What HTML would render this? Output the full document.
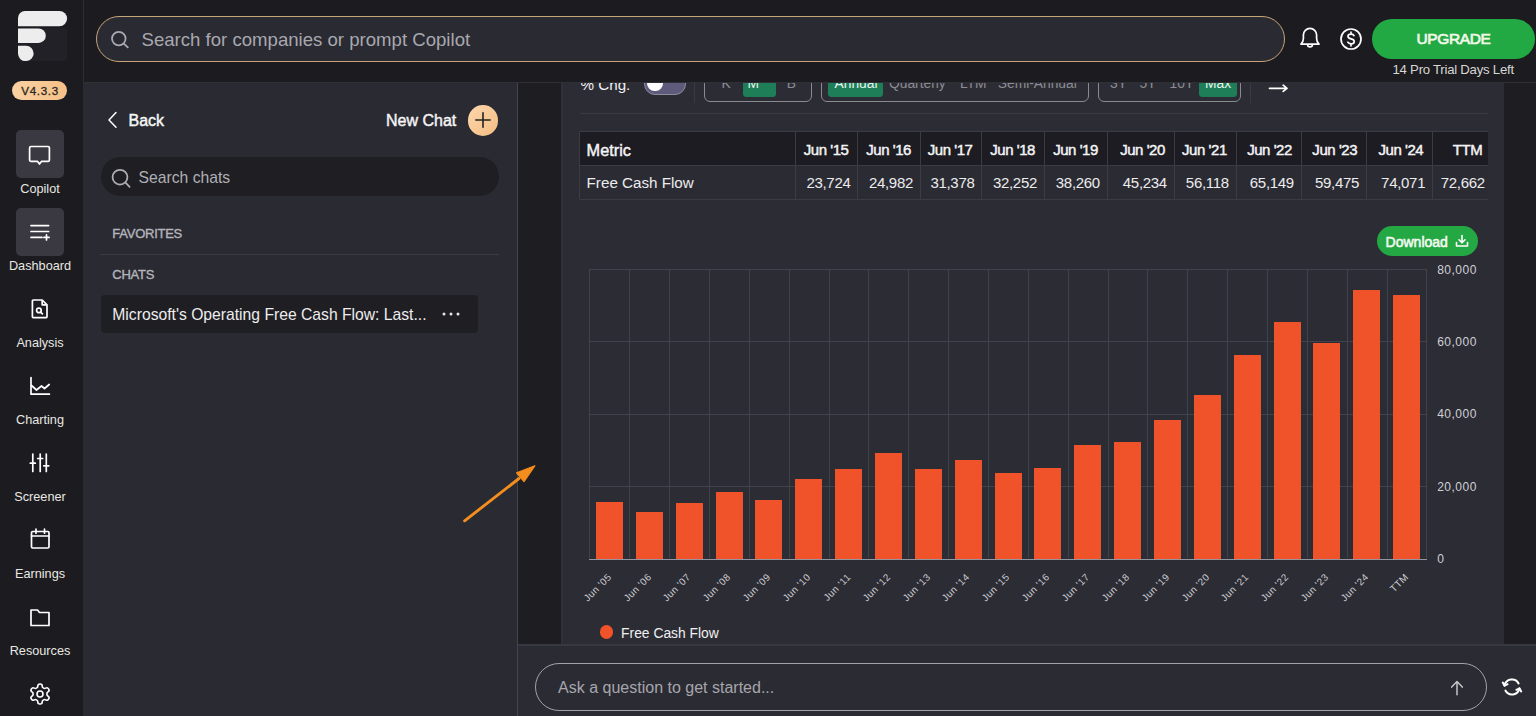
<!DOCTYPE html>
<html><head><meta charset="utf-8">
<style>
*{margin:0;padding:0;box-sizing:border-box}
html,body{width:1536px;height:716px;overflow:hidden;background:#1c1b20;font-family:"Liberation Sans",sans-serif;color:#fff}
body{position:relative}
.a{position:absolute}
.t{position:absolute;white-space:nowrap;line-height:1}
#nav{left:0;top:0;width:84px;height:716px;background:#1c1b20;border-right:1.6px solid #2e2e36}
#hdr{left:84px;top:0;width:1452px;height:82.6px;background:#1c1b20;border-bottom:1px solid #2f2f37;z-index:5}
#chatp{left:83px;top:82px;width:435px;height:634px;background:#2a2a32;border-right:1.5px solid #44444d}
#main{left:518px;top:82px;width:1018px;height:563px;background:#1e1d22}
#card{left:561px;top:82px;width:943px;height:563px;background:#2c2c35;border-left:2px solid #303039}
#bot{left:518px;top:644px;width:1018px;height:72px;background:#2b2b33;border-top:2px solid #383841;z-index:4}
.sb{-webkit-text-stroke:0.45px currentColor}
.lbl{left:0;width:80px;text-align:center;font-size:12.7px;color:#e8e8e2}
.xl{font-size:9.8px;color:#cdcdd1;letter-spacing:0.45px;transform-origin:100% 0;transform:rotate(-45deg)}
</style></head><body>
<!-- NAV -->
<div id="nav" class="a">
  <svg class="a" style="left:0;top:0" width="83" height="110" viewBox="0 0 83 110">
    <rect x="18" y="28" width="49" height="33" rx="3" fill="#222127"/>
    <path d="M25 11 H59.5 A7.6 7.6 0 0 1 59.5 26.2 H18 V18 A7 7 0 0 1 25 11Z" fill="#ededed"/>
    <path d="M18 28.4 H38.5 A7.3 7.3 0 0 1 38.5 43 H18Z" fill="#ededed"/>
    <path d="M18 45.8 H26 A7.6 7.6 0 0 1 26 61.1 H25.5 A7.5 7.5 0 0 1 18 53.6Z" fill="#ededed"/>
  </svg>
  <div class="a" style="left:12px;top:81px;width:55px;height:19px;border-radius:10px;background:linear-gradient(90deg,#f9d1a3,#f6c086)"></div>
  <div class="t sb" style="left:12.6px;top:85.2px;width:55px;text-align:center;font-size:11.6px;color:#2b2622;letter-spacing:0.7px;-webkit-text-stroke-width:0.3px">V4.3.3</div>

  <div class="a" style="left:16px;top:130px;width:48px;height:48px;border-radius:5px;background:#3a3942"></div>
  <div class="a" style="left:16px;top:208px;width:48px;height:48px;border-radius:5px;background:#3a3942"></div>

  <!-- copilot icon -->
  <svg class="a" style="left:27px;top:143px" width="25" height="24" viewBox="0 0 25 24" fill="none" stroke="#fff" stroke-width="1.7" stroke-linejoin="round">
    <path d="M4 3.5 H21 A1.4 1.4 0 0 1 22.4 4.9 V16.9 A1.4 1.4 0 0 1 21 18.3 H14.6 L12.5 21 L10.4 18.3 H4 A1.4 1.4 0 0 1 2.6 16.9 V4.9 A1.4 1.4 0 0 1 4 3.5Z"/>
  </svg>
  <!-- dashboard icon -->
  <svg class="a" style="left:28px;top:220px" width="24" height="24" viewBox="0 0 24 24" fill="none" stroke="#fff" stroke-width="1.7" stroke-linecap="round">
    <path d="M3 5.6H20.6M3 11.5H20.6M3 17.4H14M18.5 14.8v5.2M15.9 17.4h5.2"/>
  </svg>
  <!-- analysis icon -->
  <svg class="a" style="left:28px;top:297px" width="24" height="24" viewBox="0 0 24 24" fill="none" stroke="#fff" stroke-width="1.7" stroke-linejoin="round">
    <path d="M5.2 3 H14.2 L19 7.8 V19.8 A0.8 0.8 0 0 1 18.2 20.6 H5.2 A0.8 0.8 0 0 1 4.4 19.8 V3.8 A0.8 0.8 0 0 1 5.2 3Z"/>
    <path d="M14.2 3.2 V7.8 H18.8"/>
    <circle cx="10.9" cy="13.4" r="2.3"/>
    <path d="M12.6 15.1 L14.4 16.9" stroke-linecap="round"/>
  </svg>
  <!-- charting icon -->
  <svg class="a" style="left:28px;top:374px" width="24" height="24" viewBox="0 0 24 24" fill="none" stroke="#fff" stroke-width="1.7" stroke-linejoin="round" stroke-linecap="round">
    <path d="M3 3.5 V20.2 H21.4"/>
    <path d="M3.5 11.5 L8.5 16 L13.5 12 L16.5 14.5 L21.2 10.5"/>
  </svg>
  <!-- screener icon -->
  <svg class="a" style="left:28px;top:451px" width="24" height="24" viewBox="0 0 24 24" fill="none" stroke="#fff" stroke-width="1.7" stroke-linecap="round">
    <path d="M4.8 3v17.5M2.3 12.2h5M12.2 3v17.5M9.7 7.5h5M18.3 3v17.5M15.8 14.8h5"/>
  </svg>
  <!-- earnings icon -->
  <svg class="a" style="left:28px;top:527px" width="24" height="24" viewBox="0 0 24 24" fill="none" stroke="#fff" stroke-width="1.7" stroke-linecap="round" stroke-linejoin="round">
    <rect x="3.5" y="4.5" width="17.5" height="16.5" rx="1.2"/>
    <path d="M3.5 9H21M8 2.2v4M16.5 2.2v4"/>
  </svg>
  <!-- resources icon -->
  <svg class="a" style="left:28px;top:605px" width="24" height="24" viewBox="0 0 24 24" fill="none" stroke="#fff" stroke-width="1.7" stroke-linejoin="round">
    <path d="M3 5 H9.5 L11.5 7.5 H21 V20.5 H3Z"/>
  </svg>
  <!-- settings icon -->
  <svg class="a" style="left:28px;top:681.9px" width="24" height="24" viewBox="0 0 24 24" fill="none" stroke="#fff" stroke-width="1.6" stroke-linejoin="round" stroke-linecap="round">
    <path d="M12.22 2h-.44a2 2 0 0 0-2 2v.18a2 2 0 0 1-1 1.73l-.43.25a2 2 0 0 1-2 0l-.15-.08a2 2 0 0 0-2.73.73l-.22.38a2 2 0 0 0 .73 2.73l.15.1a2 2 0 0 1 1 1.72v.51a2 2 0 0 1-1 1.74l-.15.09a2 2 0 0 0-.73 2.73l.22.38a2 2 0 0 0 2.73.73l.15-.08a2 2 0 0 1 2 0l.43.25a2 2 0 0 1 1 1.73V20a2 2 0 0 0 2 2h.44a2 2 0 0 0 2-2v-.18a2 2 0 0 1 1-1.73l.43-.25a2 2 0 0 1 2 0l.15.08a2 2 0 0 0 2.73-.73l.22-.39a2 2 0 0 0-.73-2.730l-.15-.08a2 2 0 0 1-1-1.74v-.5a2 2 0 0 1 1-1.74l.15-.09a2 2 0 0 0 .73-2.73l-.22-.38a2 2 0 0 0-2.730-.73l-.15.08a2 2 0 0 1-2 0l-.43-.25a2 2 0 0 1-1-1.73V4a2 2 0 0 0-2-2z"/>
    <circle cx="12" cy="12" r="3"/>
  </svg>

  <div class="t lbl" style="top:182.9px">Copilot</div>
  <div class="t lbl" style="top:259.6px">Dashboard</div>
  <div class="t lbl" style="top:336.6px">Analysis</div>
  <div class="t lbl" style="top:413.6px">Charting</div>
  <div class="t lbl" style="top:490.8px">Screener</div>
  <div class="t lbl" style="top:567.8px">Earnings</div>
  <div class="t lbl" style="top:644.8px">Resources</div>
</div>

<!-- HEADER -->
<div id="hdr" class="a">
  <div class="a" style="left:12px;top:16px;width:1189px;height:46px;border-radius:23px;border:1.8px solid #c8a577;background:#2a2a32"></div>
  <svg class="a" style="left:24px;top:27px" width="24" height="24" viewBox="0 0 24 24" fill="none" stroke="#a9a9b0" stroke-width="1.8" stroke-linecap="round">
    <circle cx="10.8" cy="11.6" r="6.8"/><path d="M15.8 16.6 L19.8 20.4"/>
  </svg>
  <div class="t" style="left:57.5px;top:31.2px;font-size:18.6px;color:#a8a8af">Search for companies or prompt Copilot</div>

  <svg class="a" style="left:1213.8px;top:26px" width="24" height="24" viewBox="0 0 24 24" fill="none" stroke="#fff" stroke-width="1.7" stroke-linejoin="round">
    <path d="M3 18.2 C4.6 16.6 5.4 15 5.4 12.5 V9 A6.6 6.6 0 0 1 18.6 9 V12.5 C18.6 15 19.4 16.6 21 18.2 Z"/>
    <path d="M9.6 18.4 A2.4 2.4 0 0 0 14.4 18.4"/>
  </svg>
  <svg class="a" style="left:1254.5px;top:27px" width="24" height="24" viewBox="0 0 24 24" fill="none" stroke="#fff" stroke-width="1.7" stroke-linecap="round">
    <circle cx="12" cy="12" r="10"/>
    <path d="M15 8.6 C14.5 7.6 13.4 7.2 12 7.2 C10.2 7.2 9 8 9 9.5 C9 12.6 15.2 11.2 15.2 14.4 C15.2 16 13.9 16.8 12 16.8 C10.4 16.8 9.3 16.2 8.8 15.2 M12 5.2v2M12 16.8v2"/>
  </svg>
  <div class="a" style="left:1288px;top:19px;width:163px;height:40px;border-radius:20px;background:#23a944"></div>
  <div class="t sb" style="left:1288px;top:31.4px;width:163px;text-align:center;font-size:15.5px;color:#f2f8e6;letter-spacing:-0.35px;-webkit-text-stroke-width:0.7px">UPGRADE</div>
  <div class="t" style="left:1308.5px;top:63.3px;font-size:13.2px;color:#d7d7d3;letter-spacing:-0.25px">14 Pro Trial Days Left</div>
</div>

<!-- CHAT LIST PANEL -->
<div id="chatp" class="a">
  <svg class="a" style="left:20.8px;top:26.4px" width="16" height="24" viewBox="0 0 16 24" fill="none" stroke="#fff" stroke-width="1.5" stroke-linecap="round" stroke-linejoin="round">
    <path d="M12 4.5 L5 12 L12 19.2"/>
  </svg>
  <div class="t sb" style="left:45.5px;top:31px;font-size:16px;color:#f4f4f4">Back</div>
  <div class="t sb" style="left:303px;top:30.9px;font-size:16px;color:#f4f4f4">New Chat</div>
  <div class="a" style="left:384.5px;top:22.8px;width:30.8px;height:30.8px;border-radius:50%;background:linear-gradient(135deg,#fbd7ad,#f5bd82)"></div>
  <svg class="a" style="left:388px;top:26.2px" width="24" height="24" viewBox="0 0 24 24" fill="none" stroke="#222" stroke-width="1.6" stroke-linecap="round">
    <path d="M12 4.8V19.2M4.8 12H19.2"/>
  </svg>

  <div class="a" style="left:18.4px;top:75.3px;width:397.4px;height:39px;border-radius:20px;background:#1e1e23"></div>
  <svg class="a" style="left:26px;top:84px" width="24" height="24" viewBox="0 0 24 24" fill="none" stroke="#adadb3" stroke-width="1.8" stroke-linecap="round">
    <circle cx="11" cy="11.2" r="7.4"/><path d="M16.5 16.7 L20.6 20.8"/>
  </svg>
  <div class="t" style="left:55.6px;top:87.9px;font-size:15.7px;color:#b0b0b5">Search chats</div>

  <div class="t sb" style="left:29.3px;top:144.9px;font-size:13px;color:#b5b5bb;letter-spacing:-0.25px;-webkit-text-stroke-width:0.35px">FAVORITES</div>
  <div class="a" style="left:17px;top:171.5px;width:399px;height:1px;background:#3b3b44"></div>
  <div class="t sb" style="left:29.3px;top:186.1px;font-size:13px;color:#b5b5bb;letter-spacing:-0.25px;-webkit-text-stroke-width:0.35px">CHATS</div>

  <div class="a" style="left:18.4px;top:213px;width:376.5px;height:38px;border-radius:4px;background:#1e1e23"></div>
  <div class="t" style="left:29.3px;top:224.5px;font-size:15.7px;color:#ededed">Microsoft's Operating Free Cash Flow: Last...</div>
  <svg class="a" style="left:358px;top:226px" width="22" height="12" viewBox="0 0 22 12" fill="#e8e8e8">
    <circle cx="3" cy="6" r="1.5"/><circle cx="10" cy="6" r="1.5"/><circle cx="17" cy="6" r="1.5"/>
  </svg>

  
</div>
<div id="main" class="a"></div>
<div id="card" class="a"></div>
<div class="t" style="left:580.5px;top:76.9px;font-size:15.2px;color:#f0f0f0">% Chg.</div>
<div class="a" style="left:644.2px;top:72.3px;width:41.5px;height:22.6px;border-radius:11px;background:#5d5a7b;border:1.5px solid #8e8c9c"></div>
<div class="a" style="left:647.4px;top:75.5px;width:15.5px;height:15.5px;border-radius:50%;background:#fff"></div>
<div class="a" style="left:694.2px;top:60px;width:1px;height:43px;background:#3a3a43"></div>
<div class="a" style="left:1250.4px;top:60px;width:1px;height:43px;background:#3a3a43"></div>
<div class="a" style="left:703.7px;top:60px;width:108.7px;height:41.6px;border-radius:6px;border:1.5px solid #8a8a91"></div>
<div class="a" style="left:821.3px;top:60px;width:267.7px;height:41.6px;border-radius:6px;border:1.5px solid #8a8a91"></div>
<div class="a" style="left:1097.9px;top:60px;width:143.2px;height:41.6px;border-radius:6px;border:1.5px solid #8a8a91"></div>
<div class="a" style="left:742.6px;top:66px;width:33.0px;height:31.0px;border-radius:3.5px;background:#1d7e57"></div>
<div class="a" style="left:828px;top:66px;width:54.7px;height:30.9px;border-radius:3.5px;background:#1d7e57"></div>
<div class="a" style="left:1198.9px;top:66px;width:37.9px;height:31.3px;border-radius:3.5px;background:#1d7e57"></div>
<div class="t" style="left:721.5px;top:76.8px;font-size:13.8px;color:#8c8c92">K</div>
<div class="t" style="left:747.5px;top:76.8px;font-size:13.8px;color:#e8f5ee">M</div>
<div class="t" style="left:786.7px;top:76.8px;font-size:13.8px;color:#8c8c92">B</div>
<div class="t" style="left:834.5px;top:76.8px;font-size:13.8px;color:#e8f5ee">Annual</div>
<div class="t" style="left:889px;top:76.8px;font-size:13.8px;color:#8c8c92">Quarterly</div>
<div class="t" style="left:960px;top:76.8px;font-size:13.8px;color:#8c8c92">LTM</div>
<div class="t" style="left:997.8px;top:76.8px;font-size:13.8px;color:#8c8c92">Semi-Annual</div>
<div class="t" style="left:1110px;top:76.8px;font-size:13.8px;color:#8c8c92">3Y</div>
<div class="t" style="left:1139.4px;top:76.8px;font-size:13.8px;color:#8c8c92">5Y</div>
<div class="t" style="left:1169.5px;top:76.8px;font-size:13.8px;color:#8c8c92">10Y</div>
<div class="t" style="left:1205px;top:76.8px;font-size:13.8px;color:#e8f5ee">Max</div>
<svg class="a" style="left:1266px;top:80px" width="24" height="16" viewBox="0 0 24 16" fill="none" stroke="#fff" stroke-width="1.7" stroke-linecap="round" stroke-linejoin="round"><path d="M3.5 8.3H21M17.2 5.2L21 8.3L17.2 11.4"/></svg>
<div class="a" style="left:580px;top:112.5px;width:908px;height:1px;background:#3a3a43"></div>
<div class="a" style="left:579.5px;top:131.5px;width:908.5px;height:33.5px;background:#1d1c23"></div>
<div class="a" style="left:579.5px;top:165px;width:908.5px;height:34.4px;background:#2b2b34"></div>
<div class="a" style="left:579.5px;top:131.0px;width:908.5px;height:1px;background:#3c3c45"></div>
<div class="a" style="left:579.5px;top:164.5px;width:908.5px;height:1px;background:#3c3c45"></div>
<div class="a" style="left:579.5px;top:198.9px;width:908.5px;height:1px;background:#3c3c45"></div>
<div class="a" style="left:579.0px;top:131.5px;width:1.2px;height:67.9px;background:#3c3c45"></div>
<div class="a" style="left:795.0px;top:131.5px;width:1.2px;height:67.9px;background:#3c3c45"></div>
<div class="a" style="left:857.3px;top:131.5px;width:1.2px;height:67.9px;background:#3c3c45"></div>
<div class="a" style="left:919.8px;top:131.5px;width:1.2px;height:67.9px;background:#3c3c45"></div>
<div class="a" style="left:981.3px;top:131.5px;width:1.2px;height:67.9px;background:#3c3c45"></div>
<div class="a" style="left:1043.8px;top:131.5px;width:1.2px;height:67.9px;background:#3c3c45"></div>
<div class="a" style="left:1106.7px;top:131.5px;width:1.2px;height:67.9px;background:#3c3c45"></div>
<div class="a" style="left:1173.7px;top:131.5px;width:1.2px;height:67.9px;background:#3c3c45"></div>
<div class="a" style="left:1235.6px;top:131.5px;width:1.2px;height:67.9px;background:#3c3c45"></div>
<div class="a" style="left:1300.7px;top:131.5px;width:1.2px;height:67.9px;background:#3c3c45"></div>
<div class="a" style="left:1365.9px;top:131.5px;width:1.2px;height:67.9px;background:#3c3c45"></div>
<div class="a" style="left:1432.0px;top:131.5px;width:1.2px;height:67.9px;background:#3c3c45"></div>
<div class="t sb" style="left:586.6px;top:141.5px;font-size:16.3px;color:#f4f4f4">Metric</div>
<div class="t" style="left:586.6px;top:174.8px;font-size:15.2px;color:#ececec">Free Cash Flow</div>
<div class="t sb" style="right:687.5px;top:141.7px;font-size:15px;color:#f4f4f4;letter-spacing:-0.45px">Jun '15</div>
<div class="t" style="right:685.5px;top:174.9px;font-size:15px;color:#ececec;letter-spacing:-0.3px">23,724</div>
<div class="t sb" style="right:625.0px;top:141.7px;font-size:15px;color:#f4f4f4;letter-spacing:-0.45px">Jun '16</div>
<div class="t" style="right:623.0px;top:174.9px;font-size:15px;color:#ececec;letter-spacing:-0.3px">24,982</div>
<div class="t sb" style="right:563.5px;top:141.7px;font-size:15px;color:#f4f4f4;letter-spacing:-0.45px">Jun '17</div>
<div class="t" style="right:561.5px;top:174.9px;font-size:15px;color:#ececec;letter-spacing:-0.3px">31,378</div>
<div class="t sb" style="right:501.0px;top:141.7px;font-size:15px;color:#f4f4f4;letter-spacing:-0.45px">Jun '18</div>
<div class="t" style="right:499.0px;top:174.9px;font-size:15px;color:#ececec;letter-spacing:-0.3px">32,252</div>
<div class="t sb" style="right:438.1px;top:141.7px;font-size:15px;color:#f4f4f4;letter-spacing:-0.45px">Jun '19</div>
<div class="t" style="right:436.1px;top:174.9px;font-size:15px;color:#ececec;letter-spacing:-0.3px">38,260</div>
<div class="t sb" style="right:371.1px;top:141.7px;font-size:15px;color:#f4f4f4;letter-spacing:-0.45px">Jun '20</div>
<div class="t" style="right:369.1px;top:174.9px;font-size:15px;color:#ececec;letter-spacing:-0.3px">45,234</div>
<div class="t sb" style="right:309.2px;top:141.7px;font-size:15px;color:#f4f4f4;letter-spacing:-0.45px">Jun '21</div>
<div class="t" style="right:307.2px;top:174.9px;font-size:15px;color:#ececec;letter-spacing:-0.3px">56,118</div>
<div class="t sb" style="right:244.1px;top:141.7px;font-size:15px;color:#f4f4f4;letter-spacing:-0.45px">Jun '22</div>
<div class="t" style="right:242.1px;top:174.9px;font-size:15px;color:#ececec;letter-spacing:-0.3px">65,149</div>
<div class="t sb" style="right:178.9px;top:141.7px;font-size:15px;color:#f4f4f4;letter-spacing:-0.45px">Jun '23</div>
<div class="t" style="right:176.9px;top:174.9px;font-size:15px;color:#ececec;letter-spacing:-0.3px">59,475</div>
<div class="t sb" style="right:112.8px;top:141.7px;font-size:15px;color:#f4f4f4;letter-spacing:-0.45px">Jun '24</div>
<div class="t" style="right:110.8px;top:174.9px;font-size:15px;color:#ececec;letter-spacing:-0.3px">74,071</div>
<div class="t sb" style="right:53.7px;top:141.7px;font-size:15px;color:#f4f4f4;letter-spacing:-0.45px">TTM</div>
<div class="t" style="right:51.2px;top:174.9px;font-size:15px;color:#ececec;letter-spacing:-0.3px">72,662</div>
<div class="a" style="left:1377px;top:225.7px;width:101.4px;height:30px;border-radius:15px;background:#24a843"></div>
<div class="t sb" style="left:1385.6px;top:234.8px;font-size:14px;color:#f4faf2;-webkit-text-stroke-width:0.55px">Download</div>
<svg class="a" style="left:1454px;top:233px" width="16" height="16" viewBox="0 0 16 16" fill="none" stroke="#fff" stroke-width="1.6" stroke-linecap="round" stroke-linejoin="round"><path d="M8 2.5V9.5M5 6.8L8 9.8L11 6.8M2.5 9.5V13H13.5V9.5"/></svg>
<div class="a" style="left:589.4px;top:269.0px;width:838.0px;height:1px;background:#42424c"></div>
<div class="a" style="left:589.4px;top:341.3px;width:838.0px;height:1px;background:#42424c"></div>
<div class="a" style="left:589.4px;top:413.5px;width:838.0px;height:1px;background:#42424c"></div>
<div class="a" style="left:589.4px;top:485.8px;width:838.0px;height:1px;background:#42424c"></div>
<div class="a" style="left:589.40px;top:269.0px;width:1px;height:289.1px;background:#42424c"></div>
<div class="a" style="left:629.26px;top:269.0px;width:1px;height:289.1px;background:#42424c"></div>
<div class="a" style="left:669.11px;top:269.0px;width:1px;height:289.1px;background:#42424c"></div>
<div class="a" style="left:708.97px;top:269.0px;width:1px;height:289.1px;background:#42424c"></div>
<div class="a" style="left:748.83px;top:269.0px;width:1px;height:289.1px;background:#42424c"></div>
<div class="a" style="left:788.69px;top:269.0px;width:1px;height:289.1px;background:#42424c"></div>
<div class="a" style="left:828.54px;top:269.0px;width:1px;height:289.1px;background:#42424c"></div>
<div class="a" style="left:868.40px;top:269.0px;width:1px;height:289.1px;background:#42424c"></div>
<div class="a" style="left:908.26px;top:269.0px;width:1px;height:289.1px;background:#42424c"></div>
<div class="a" style="left:948.11px;top:269.0px;width:1px;height:289.1px;background:#42424c"></div>
<div class="a" style="left:987.97px;top:269.0px;width:1px;height:289.1px;background:#42424c"></div>
<div class="a" style="left:1027.83px;top:269.0px;width:1px;height:289.1px;background:#42424c"></div>
<div class="a" style="left:1067.69px;top:269.0px;width:1px;height:289.1px;background:#42424c"></div>
<div class="a" style="left:1107.54px;top:269.0px;width:1px;height:289.1px;background:#42424c"></div>
<div class="a" style="left:1147.40px;top:269.0px;width:1px;height:289.1px;background:#42424c"></div>
<div class="a" style="left:1187.26px;top:269.0px;width:1px;height:289.1px;background:#42424c"></div>
<div class="a" style="left:1227.11px;top:269.0px;width:1px;height:289.1px;background:#42424c"></div>
<div class="a" style="left:1266.97px;top:269.0px;width:1px;height:289.1px;background:#42424c"></div>
<div class="a" style="left:1306.83px;top:269.0px;width:1px;height:289.1px;background:#42424c"></div>
<div class="a" style="left:1346.69px;top:269.0px;width:1px;height:289.1px;background:#42424c"></div>
<div class="a" style="left:1386.54px;top:269.0px;width:1px;height:289.1px;background:#42424c"></div>
<div class="a" style="left:1426.40px;top:269.0px;width:1px;height:289.1px;background:#42424c"></div>
<div class="a" style="left:595.93px;top:501.70px;width:27px;height:56.90px;background:#f0522a"></div>
<div class="a" style="left:635.79px;top:512.10px;width:27px;height:46.50px;background:#f0522a"></div>
<div class="a" style="left:675.64px;top:502.80px;width:27px;height:55.80px;background:#f0522a"></div>
<div class="a" style="left:715.50px;top:491.90px;width:27px;height:66.70px;background:#f0522a"></div>
<div class="a" style="left:755.36px;top:500.40px;width:27px;height:58.20px;background:#f0522a"></div>
<div class="a" style="left:795.21px;top:479.00px;width:27px;height:79.60px;background:#f0522a"></div>
<div class="a" style="left:835.07px;top:468.90px;width:27px;height:89.70px;background:#f0522a"></div>
<div class="a" style="left:874.93px;top:452.80px;width:27px;height:105.80px;background:#f0522a"></div>
<div class="a" style="left:914.79px;top:468.90px;width:27px;height:89.70px;background:#f0522a"></div>
<div class="a" style="left:954.64px;top:460.20px;width:27px;height:98.40px;background:#f0522a"></div>
<div class="a" style="left:994.50px;top:472.60px;width:27px;height:86.00px;background:#f0522a"></div>
<div class="a" style="left:1034.36px;top:468.04px;width:27px;height:90.56px;background:#f0522a"></div>
<div class="a" style="left:1074.21px;top:444.85px;width:27px;height:113.75px;background:#f0522a"></div>
<div class="a" style="left:1114.07px;top:441.69px;width:27px;height:116.91px;background:#f0522a"></div>
<div class="a" style="left:1153.93px;top:419.91px;width:27px;height:138.69px;background:#f0522a"></div>
<div class="a" style="left:1193.79px;top:394.63px;width:27px;height:163.97px;background:#f0522a"></div>
<div class="a" style="left:1233.64px;top:355.17px;width:27px;height:203.43px;background:#f0522a"></div>
<div class="a" style="left:1273.50px;top:322.43px;width:27px;height:236.17px;background:#f0522a"></div>
<div class="a" style="left:1313.36px;top:343.00px;width:27px;height:215.60px;background:#f0522a"></div>
<div class="a" style="left:1353.21px;top:290.09px;width:27px;height:268.51px;background:#f0522a"></div>
<div class="a" style="left:1393.07px;top:295.20px;width:27px;height:263.40px;background:#f0522a"></div>
<div class="a" style="left:589.4px;top:558.5px;width:838.0px;height:1.4px;background:#9595a0"></div>
<div class="t" style="left:1437.2px;top:263.9px;font-size:12px;color:#d0d0d4;letter-spacing:0.5px">80,000</div>
<div class="t" style="left:1437.2px;top:336.2px;font-size:12px;color:#d0d0d4;letter-spacing:0.5px">60,000</div>
<div class="t" style="left:1437.2px;top:408.4px;font-size:12px;color:#d0d0d4;letter-spacing:0.5px">40,000</div>
<div class="t" style="left:1437.2px;top:480.7px;font-size:12px;color:#d0d0d4;letter-spacing:0.5px">20,000</div>
<div class="t" style="left:1437.2px;top:553.0px;font-size:12px;color:#d0d0d4;letter-spacing:0.5px">0</div>
<div class="t xl" style="right:929.8px;top:571.8px">Jun '05</div>
<div class="t xl" style="right:889.9px;top:571.8px">Jun '06</div>
<div class="t xl" style="right:850.1px;top:571.8px">Jun '07</div>
<div class="t xl" style="right:810.2px;top:571.8px">Jun '08</div>
<div class="t xl" style="right:770.3px;top:571.8px">Jun '09</div>
<div class="t xl" style="right:730.5px;top:571.8px">Jun '10</div>
<div class="t xl" style="right:690.6px;top:571.8px">Jun '11</div>
<div class="t xl" style="right:650.8px;top:571.8px">Jun '12</div>
<div class="t xl" style="right:610.9px;top:571.8px">Jun '13</div>
<div class="t xl" style="right:571.1px;top:571.8px">Jun '14</div>
<div class="t xl" style="right:531.2px;top:571.8px">Jun '15</div>
<div class="t xl" style="right:491.3px;top:571.8px">Jun '16</div>
<div class="t xl" style="right:451.5px;top:571.8px">Jun '17</div>
<div class="t xl" style="right:411.6px;top:571.8px">Jun '18</div>
<div class="t xl" style="right:371.8px;top:571.8px">Jun '19</div>
<div class="t xl" style="right:331.9px;top:571.8px">Jun '20</div>
<div class="t xl" style="right:292.1px;top:571.8px">Jun '21</div>
<div class="t xl" style="right:252.2px;top:571.8px">Jun '22</div>
<div class="t xl" style="right:212.3px;top:571.8px">Jun '23</div>
<div class="t xl" style="right:172.5px;top:571.8px">Jun '24</div>
<div class="t xl" style="right:132.6px;top:571.8px">TTM</div>
<div class="a" style="left:599.9px;top:625.3px;width:13.5px;height:13.5px;border-radius:50%;background:#f0522a"></div>
<div class="t" style="left:621.1px;top:627.4px;font-size:13.85px;color:#f0f0f0">Free Cash Flow</div><!-- BOTTOM -->
<div id="bot" class="a">
  <div class="a" style="left:17.1px;top:17px;width:952px;height:47.9px;border-radius:24px;border:1.8px solid #a2a2a9"></div>
  <div class="t" style="left:40.1px;top:33.9px;font-size:16px;color:#a6a6ac">Ask a question to get started...</div>
  <svg class="a" style="left:929px;top:32px" width="20" height="20" viewBox="0 0 20 20" fill="none" stroke="#c4c4c8" stroke-width="1.5" stroke-linecap="round" stroke-linejoin="round">
    <path d="M10 3.8V16.8M4.7 9.1L10 3.6L15.3 9.1"/>
  </svg>
  <svg class="a" style="left:982px;top:28.8px" width="24" height="24" viewBox="0 0 24 24" fill="none" stroke="#fff" stroke-width="2" stroke-linecap="round" stroke-linejoin="round">
    <path d="M4.5 10.5 A7.6 7.6 0 0 1 18.6 8.4"/>
    <path d="M19.5 13.5 A7.6 7.6 0 0 1 5.4 15.6"/>
    <path d="M2.8 7.6 L4.6 10.7 L7.6 9.2"/>
    <path d="M21.2 16.4 L19.4 13.3 L16.4 14.8"/>
  </svg>
</div>
<svg class="a" style="left:455px;top:455px;z-index:9" width="90" height="75" viewBox="0 0 90 75">
<path d="M9.6 65.8 L64 23.5" stroke="#f38d1d" stroke-width="2.9" stroke-linecap="round"/>
<path d="M79.8 10.8 L61.6 17.9 L69 26.6 Z" fill="#f38d1d" stroke="#f38d1d" stroke-width="1.2" stroke-linejoin="round"/>
</svg>
</body></html>
